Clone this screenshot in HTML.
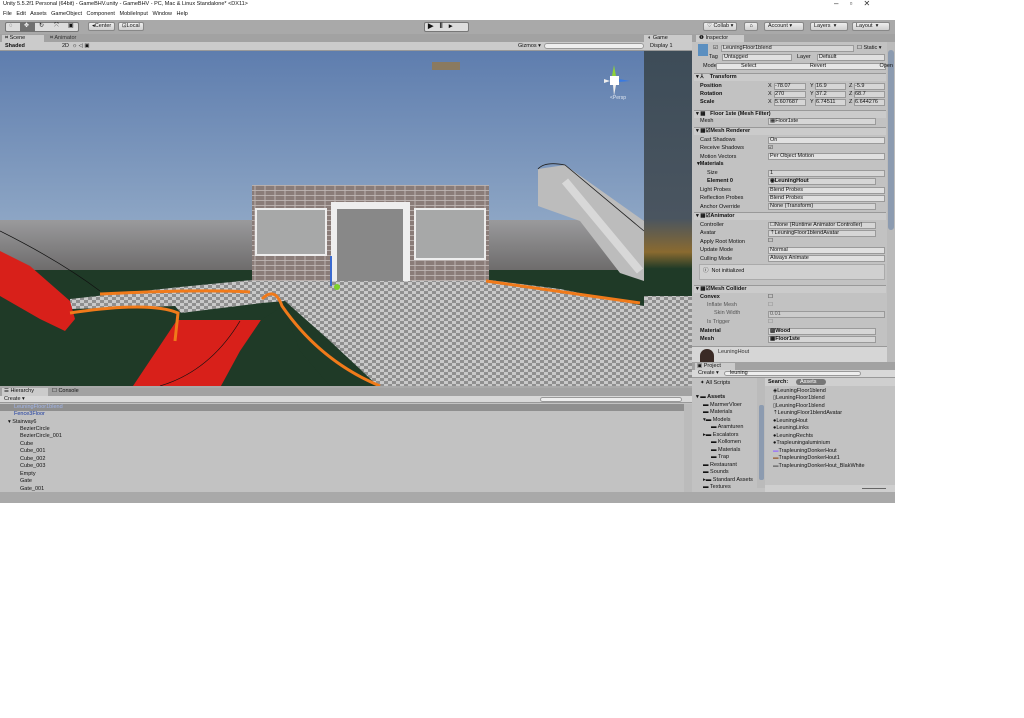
<!DOCTYPE html><html><head><style>
*{margin:0;padding:0;box-sizing:border-box}
body{width:1024px;height:718px;background:#fff;font-family:"Liberation Sans",sans-serif;font-size:6px;color:#111;position:relative;overflow:hidden}
.a{position:absolute}
.t{position:absolute;white-space:nowrap;font-size:5.5px;line-height:7px}
.b{font-weight:bold}
.f{position:absolute;background:#d6d6d6;border:1px solid #9a9a9a;height:7px}
.btn{position:absolute;background:linear-gradient(#eee,#cfcfcf);border:1px solid #888;border-radius:2px;height:9px;font-size:5.5px;line-height:7px;padding:0 3px;white-space:nowrap}
.hdr{position:absolute;left:694px;width:192px;height:8px;background:#cbcbcb;border-top:1px solid #999}
</style></head><body>
<div class="t" style="left:3px;top:1px;font-size:5.5px">Unity 5.5.2f1 Personal (64bit) - GameBHV.unity - GameBHV - PC, Mac &amp; Linux Standalone* &lt;DX11&gt;</div>
<div class="t" style="left:834px;top:0;font-size:8px;color:#333">–&nbsp;&nbsp;&nbsp;&nbsp;&nbsp;▫&nbsp;&nbsp;&nbsp;&nbsp;&nbsp;✕</div>
<div class="t" style="left:3px;top:11px;word-spacing:3px">File Edit Assets GameObject Component MobileInput Window Help</div>
<div class="a" style="left:0;top:20px;width:895px;height:483px;background:#a9a9a9"></div>
<div class="a" style="left:5px;top:22px;width:74px;height:10px;border:1px solid #777;background:#ddd;border-radius:2px"></div>
<div class="a" style="left:20px;top:22px;width:15px;height:10px;background:#707070"></div>
<div class="t" style="left:9px;top:23px;font-size:6px">◌</div><div class="t" style="left:24px;top:23px;font-size:6px;color:#fff">✥</div><div class="t" style="left:39px;top:23px;font-size:6px">↻</div><div class="t" style="left:54px;top:23px;font-size:6px">⤧</div><div class="t" style="left:68px;top:23px;font-size:6px">▣</div>
<div class="btn" style="left:88px;top:22px">◂Center</div>
<div class="btn" style="left:118px;top:22px">⊡Local</div>
<div class="a" style="left:424px;top:22px;width:45px;height:10px;border:1px solid #777;background:#ddd;border-radius:2px"></div>
<div class="t b" style="left:428px;top:23px;font-size:7px;letter-spacing:6px">▶ǁ▸</div>
<div class="btn" style="left:703px;top:22px">♡ Collab ▾</div>
<div class="btn" style="left:744px;top:22px">&nbsp;⌂&nbsp;</div>
<div class="btn" style="left:764px;top:22px;width:40px">Account ▾</div>
<div class="btn" style="left:810px;top:22px;width:38px">Layers &nbsp;▾</div>
<div class="btn" style="left:852px;top:22px;width:38px">Layout &nbsp;▾</div>
<div class="a" style="left:0;top:34px;width:694px;height:8px;background:#a2a2a2"></div>
<div class="a" style="left:2px;top:35px;width:42px;height:7px;background:#cbcbcb"></div>
<div class="t" style="left:5px;top:35px">⌗ Scene</div>
<div class="t" style="left:50px;top:35px;color:#333">⌗ Animator</div>
<div class="a" style="left:0;top:42px;width:644px;height:9px;background:#cbcbcb;border-bottom:1px solid #999"></div>
<div class="t b" style="left:5px;top:43px">Shaded</div><div class="t" style="left:62px;top:43px">2D &nbsp;☼ ◁ ▣</div>
<div class="t" style="left:518px;top:43px">Gizmos ▾</div>
<div class="a" style="left:544px;top:43px;width:100px;height:6px;background:#eee;border:1px solid #999;border-radius:3px"></div>
<div class="a" style="left:644px;top:35px;width:48px;height:7px;background:#cbcbcb"></div>
<div class="t" style="left:648px;top:35px">◐ Game</div>
<div class="a" style="left:644px;top:42px;width:48px;height:9px;background:#cbcbcb;border-bottom:1px solid #999"></div>
<div class="t" style="left:650px;top:43px">Display 1</div>
<svg class="a" style="left:0;top:51px" width="692" height="335" viewBox="0 0 692 335">
<defs>
<linearGradient id="sky" x1="0" y1="0" x2="0" y2="1"><stop offset="0" stop-color="#5e7dae"/><stop offset=".7" stop-color="#9fb5cd"/><stop offset="1" stop-color="#d9dfe3"/></linearGradient>
<linearGradient id="hz" x1="0" y1="0" x2="0" y2="1"><stop offset="0" stop-color="#9a9a9c"/><stop offset="1" stop-color="#6c6a6a"/></linearGradient>
<linearGradient id="gv" x1="0" y1="0" x2="0" y2="1"><stop offset="0" stop-color="#3d4c58"/><stop offset=".5" stop-color="#4a5560"/><stop offset=".6" stop-color="#8a6a30"/><stop offset=".65" stop-color="#1f3a27"/><stop offset="1" stop-color="#1f3a27"/></linearGradient>
<pattern id="ck" width="8" height="6" patternUnits="userSpaceOnUse"><rect width="8" height="6" fill="#c9c9c9"/><rect width="4" height="3" fill="#8f8f8f"/><rect x="4" y="3" width="4" height="3" fill="#8f8f8f"/></pattern>
<pattern id="br" width="10" height="5" patternUnits="userSpaceOnUse"><rect width="10" height="5" fill="#8a7c78"/><path d="M0 4.5H10M5 0V4.5" stroke="#c8c0bd" stroke-width=".8"/></pattern>
</defs>
<rect width="644" height="335" fill="url(#sky)"/>
<rect y="169" width="644" height="52" fill="url(#hz)"/>
<rect y="219" width="644" height="116" fill="#1f3a27"/>
<path d="M70 248 L180 236 L252 229 L490 229 L560 238 L644 255 L644 335 L378 335 L330 290 L285 250 L262 252 L181 262 L175 255 L70 258Z" fill="url(#ck)"/>
<path d="M0 200 L30 215 L70 250 L75 268 L65 280 L40 268 L0 245Z" fill="#d8201a"/>
<path d="M177 269 L261 269 L240 300 L221 335 L133 335Z" fill="#d8201a"/>
<path d="M261 269 L283 255 L300 300 L330 335 L221 335Z" fill="#1f3a27"/>
<rect x="252" y="134" width="237" height="96" fill="url(#br)"/>
<rect x="256" y="158" width="70" height="46" fill="#a7a8a8" stroke="#eee" stroke-width="2"/>
<rect x="415" y="158" width="70" height="50" fill="#a7a8a8" stroke="#eee" stroke-width="2"/>
<rect x="331" y="151" width="79" height="79" fill="#eee"/>
<rect x="337" y="158" width="66" height="72" fill="#888"/>
<path d="M538 118 L565 114 L644 170 L644 230 L620 222 L580 170 L538 155Z" fill="#bcbcbc"/>
<path d="M565 130 L640 220" stroke="#d8d8d8" stroke-width="8"/>
<path d="M538 118 Q545 110 565 114 L644 180" fill="none" stroke="#222" stroke-width=".8"/>
<rect x="644" y="0" width="48" height="335" fill="url(#gv)"/>
<rect x="644" y="245" width="48" height="90" fill="url(#ck)"/>
<path d="M100 243 Q200 238 250 241" stroke="#f07a1a" stroke-width="3" fill="none"/>
<path d="M70 262 Q150 250 178 262 L175 290" stroke="#f07a1a" stroke-width="3" fill="none"/>
<path d="M486 230 L640 252" stroke="#f07a1a" stroke-width="3" fill="none"/>
<path d="M262 248 Q275 235 282 255 Q320 310 380 335" stroke="#f07a1a" stroke-width="3" fill="none"/>
<path d="M0 180 Q60 210 100 240 M240 270 Q210 320 160 335" stroke="#111" stroke-width=".7" fill="none"/>
<rect x="330" y="205" width="2" height="30" fill="#3a6ad0"/>
<circle cx="337" cy="236" r="3" fill="#7cd12a"/>
<rect x="432" y="11" width="28" height="8" fill="#8a7a60"/>
<rect x="610" y="25" width="9" height="9" fill="#fff"/><path d="M614 14 L616 25 L612 25Z" fill="#8ed13a"/><path d="M630 30 L619 28 L619 31Z" fill="#3a7ae0"/><path d="M604 28 L610 30 L604 32Z M613 34 L616 34 L614 45Z" fill="#eee"/>
<text x="610" y="48" font-size="5" fill="#e0e6f0" font-family="Liberation Sans">&lt;Persp</text>
</svg>
<div class="a" style="left:0;top:388px;width:692px;height:8px;background:#a2a2a2"></div>
<div class="a" style="left:2px;top:388px;width:46px;height:8px;background:#cbcbcb"></div>
<div class="t" style="left:4px;top:388px">☰ Hierarchy</div><div class="t" style="left:52px;top:388px">☐ Console</div>
<div class="a" style="left:0;top:396px;width:692px;height:96px;background:#c2c2c2"></div>
<div class="a" style="left:0;top:396px;width:692px;height:7px;background:#d8d8d8;border-bottom:1px solid #999"></div>
<div class="t" style="left:4px;top:396px">Create ▾</div>
<div class="a" style="left:540px;top:397px;width:142px;height:5px;background:#eee;border:1px solid #999;border-radius:3px"></div>
<div class="a" style="left:0;top:404px;width:684px;height:7px;background:#8f8f8f"></div>
<div class="a" style="left:684px;top:404px;width:8px;height:88px;background:#bbb"></div>
<div class="t" style="left:14px;top:404px;color:#a0b4e8">LeuningFloor1blend</div>
<div class="t" style="left:14px;top:411px;color:#1a3aa0">Fence3Floor</div>
<div class="t" style="left:8px;top:418.5px;line-height:7.5px">▾ Stairway6</div>
<div class="t" style="left:20px;top:426px;line-height:7.45px">BezierCircle<br>BezierCircle_001<br>Cube<br>Cube_001<br>Cube_002<br>Cube_003<br>Empty<br>Gate<br>Gate_001</div>
<div class="a" style="left:0;top:492px;width:895px;height:11px;background:#a9a9a9"></div>
<div class="a" style="left:692px;top:34px;width:203px;height:328px;background:#c2c2c2"></div>
<div class="a" style="left:692px;top:34px;width:203px;height:8px;background:#a2a2a2"></div>
<div class="a" style="left:696px;top:35px;width:48px;height:7px;background:#cbcbcb"></div>
<div class="t" style="left:699px;top:35px">❶ Inspector</div>
<div class="a" style="left:887px;top:42px;width:8px;height:320px;background:#bbb"></div>
<div class="a" style="left:888px;top:50px;width:6px;height:180px;background:#8c9bb0;border-radius:3px"></div>
<div class="a" style="left:698px;top:44px;width:10px;height:12px;background:#5b8fc0"></div>
<div class="t" style="left:713px;top:45px">☑</div><div class="f" style="left:721px;top:45px;width:133px"></div><div class="t" style="left:723px;top:45px">LeuningFloor1blend</div>
<div class="t" style="left:857px;top:45px">☐ Static ▾</div>
<div class="t" style="left:709px;top:54px">Tag</div><div class="f" style="left:722px;top:54px;width:70px;background:#e0e0e0"></div><div class="t" style="left:724px;top:54px">Untagged</div>
<div class="t" style="left:797px;top:54px">Layer</div><div class="f" style="left:817px;top:54px;width:68px;background:#e0e0e0"></div><div class="t" style="left:819px;top:54px">Default</div>
<div class="t" style="left:703px;top:63px">Model</div><div class="f" style="left:716px;top:63px;width:170px;background:#e6e6e6"></div><div class="t" style="left:741px;top:63px;word-spacing:52px">Select Revert Open</div>
<div class="hdr" style="top:73px"></div><div class="t b" style="left:696px;top:74px">▾ ⅄ &nbsp;&nbsp;&nbsp;Transform</div>
<div class="t b" style="left:700px;top:82px;line-height:8px">Position<br>Rotation<br>Scale</div>
<div class="t" style="left:768px;top:82px;line-height:8px">X<br>X<br>X</div><div class="t" style="left:810px;top:82px;line-height:8px">Y<br>Y<br>Y</div><div class="t" style="left:849px;top:82px;line-height:8px">Z<br>Z<br>Z</div>
<div class="f" style="left:774px;top:83px;width:32px"></div><div class="f" style="left:815px;top:83px;width:31px"></div><div class="f" style="left:854px;top:83px;width:31px"></div>
<div class="f" style="left:774px;top:91px;width:32px"></div><div class="f" style="left:815px;top:91px;width:31px"></div><div class="f" style="left:854px;top:91px;width:31px"></div>
<div class="f" style="left:774px;top:99px;width:32px"></div><div class="f" style="left:815px;top:99px;width:31px"></div><div class="f" style="left:854px;top:99px;width:31px"></div>
<div class="t" style="left:775px;top:82px;line-height:8px">-78.07<br>270<br>5.607687</div><div class="t" style="left:816px;top:82px;line-height:8px">16.9<br>37.2<br>6.74511</div><div class="t" style="left:855px;top:82px;line-height:8px">-5.9<br>68.7<br>6.644276</div>
<div class="hdr" style="top:110px"></div><div class="t b" style="left:696px;top:111px">▾ ▦ &nbsp;&nbsp;Floor 1ste (Mesh Filter)</div>
<div class="t" style="left:700px;top:118px">Mesh</div><div class="f" style="left:768px;top:118px;width:108px"></div><div class="t" style="left:770px;top:118px">▦Floor1ste</div>
<div class="hdr" style="top:127px"></div><div class="t b" style="left:696px;top:128px">▾ ▦☑Mesh Renderer</div>
<div class="t" style="left:700px;top:136px;line-height:8.4px">Cast Shadows<br>Receive Shadows<br>Motion Vectors</div>
<div class="f" style="left:768px;top:137px;width:117px;background:#e0e0e0"></div><div class="t" style="left:770px;top:137px">On</div>
<div class="t" style="left:768px;top:145px">☑</div>
<div class="f" style="left:768px;top:153px;width:117px;background:#e0e0e0"></div><div class="t" style="left:770px;top:153px">Per Object Motion</div>
<div class="t b" style="left:697px;top:161px">▾Materials</div>
<div class="t" style="left:707px;top:170px">Size</div><div class="f" style="left:768px;top:170px;width:117px"></div><div class="t" style="left:770px;top:170px">1</div>
<div class="t b" style="left:707px;top:178px">Element 0</div><div class="f" style="left:768px;top:178px;width:108px"></div><div class="t b" style="left:770px;top:178px">◉LeuningHout</div>
<div class="t" style="left:700px;top:186px;line-height:8.4px">Light Probes<br>Reflection Probes<br>Anchor Override</div>
<div class="f" style="left:768px;top:187px;width:117px;background:#e0e0e0"></div><div class="t" style="left:770px;top:187px">Blend Probes</div>
<div class="f" style="left:768px;top:195px;width:117px;background:#e0e0e0"></div><div class="t" style="left:770px;top:195px">Blend Probes</div>
<div class="f" style="left:768px;top:203px;width:108px"></div><div class="t" style="left:770px;top:203px">None (Transform)</div>
<div class="hdr" style="top:212px"></div><div class="t b" style="left:696px;top:213px">▾ ▦☑Animator</div>
<div class="t" style="left:700px;top:221px;line-height:8.4px">Controller<br>Avatar<br>Apply Root Motion<br>Update Mode<br>Culling Mode</div>
<div class="f" style="left:768px;top:222px;width:108px"></div><div class="t" style="left:770px;top:222px">☐None (Runtime Animator Controller)</div>
<div class="f" style="left:768px;top:230px;width:108px"></div><div class="t" style="left:770px;top:230px">⇡LeuningFloor1blendAvatar</div>
<div class="t" style="left:768px;top:238px">☐</div>
<div class="f" style="left:768px;top:247px;width:117px;background:#e0e0e0"></div><div class="t" style="left:770px;top:247px">Normal</div>
<div class="f" style="left:768px;top:255px;width:117px;background:#e0e0e0"></div><div class="t" style="left:770px;top:255px">Always Animate</div>
<div class="a" style="left:699px;top:264px;width:186px;height:16px;background:#d0d0d0;border:1px solid #aaa"></div><div class="t" style="left:703px;top:268px">ⓘ &nbsp;Not initialized</div>
<div class="hdr" style="top:285px"></div><div class="t b" style="left:696px;top:286px">▾ ▦☑Mesh Collider</div>
<div class="t b" style="left:700px;top:294px">Convex</div><div class="t" style="left:768px;top:294px">☐</div>
<div class="t" style="left:707px;top:302px;color:#555">Inflate Mesh</div><div class="t" style="left:768px;top:302px;color:#777">☐</div>
<div class="t" style="left:714px;top:310px;color:#555">Skin Width</div><div class="f" style="left:768px;top:311px;width:117px;background:#ccc"></div><div class="t" style="left:770px;top:311px;color:#555">0.01</div>
<div class="t" style="left:707px;top:319px;color:#555">Is Trigger</div><div class="t" style="left:768px;top:319px;color:#777">☐</div>
<div class="t b" style="left:700px;top:327px;line-height:8.4px">Material<br>Mesh</div>
<div class="f" style="left:768px;top:328px;width:108px"></div><div class="t b" style="left:770px;top:328px">▨Wood</div>
<div class="f" style="left:768px;top:336px;width:108px"></div><div class="t b" style="left:770px;top:336px">▦Floor1ste</div>
<div class="a" style="left:692px;top:346px;width:195px;height:16px;background:#d6d6d6;border-top:1px solid #999"></div>
<div class="a" style="left:700px;top:349px;width:14px;height:13px;border-radius:7px 7px 0 0;background:#3a2a25"></div>
<div class="t" style="left:718px;top:349px;color:#333">LeuningHout</div>
<div class="a" style="left:692px;top:362px;width:203px;height:8px;background:#a2a2a2"></div>
<div class="a" style="left:695px;top:363px;width:40px;height:7px;background:#cbcbcb"></div>
<div class="t" style="left:697px;top:363px">▣ Project</div>
<div class="a" style="left:692px;top:370px;width:203px;height:8px;background:#d8d8d8;border-bottom:1px solid #999"></div>
<div class="t" style="left:698px;top:370px">Create ▾</div>
<div class="a" style="left:724px;top:371px;width:137px;height:5px;background:#eee;border:1px solid #999;border-radius:3px"></div>
<div class="t" style="left:730px;top:370px">leuning</div>
<div class="a" style="left:692px;top:378px;width:203px;height:114px;background:#c2c2c2"></div>
<div class="a" style="left:757px;top:378px;width:8px;height:110px;background:#bbb"></div>
<div class="a" style="left:759px;top:405px;width:5px;height:75px;background:#8c9bb0;border-radius:2px"></div>
<div class="a" style="left:765px;top:378px;width:130px;height:8px;background:#cfcfcf"></div>
<div class="t b" style="left:768px;top:379px">Search:</div><div class="a" style="left:796px;top:379px;width:30px;height:6px;background:#777;border-radius:3px"></div><div class="t" style="left:800px;top:379px;color:#fff">Assets</div>
<div class="t" style="left:700px;top:380px">✦ All Scripts</div>
<div class="t b" style="left:696px;top:394px">▾ ▬ Assets</div>
<div class="t" style="left:703px;top:402px;line-height:7.45px">▬ MarmerVloer<br>▬ Materials<br>▾▬ Models<br><span style="padding-left:8px">▬ Aramturen</span><br>▸▬ Escalators<br><span style="padding-left:8px">▬ Kollomen</span><br><span style="padding-left:8px">▬ Materials</span><br><span style="padding-left:8px">▬ Trap</span><br>▬ Restaurant<br>▬ Sounds<br>▸▬ Standard Assets<br>▬ Textures</div>
<div class="t" style="left:773px;top:388px;line-height:7.45px">◈LeuningFloor1blend<br>▯LeuningFloor1blend<br>▯LeuningFloor1blend<br>⇡LeuningFloor1blendAvatar<br>●LeuningHout<br>●LeuningLinks<br>●LeuningRechts<br>●Trapleuningaluminium<br><span style="color:#a080f0">▬</span>TrapleuningDonkerHout<br><span style="color:#a07050">▬</span>TrapleuningDonkerHout1<br><span style="color:#777">▬</span>TrapleuningDonkerHout_BlakWhite</div>
<div class="a" style="left:765px;top:485px;width:130px;height:7px;background:#cfcfcf"></div>
<div class="a" style="left:862px;top:488px;width:24px;height:1px;background:#666"></div>
</body></html>
